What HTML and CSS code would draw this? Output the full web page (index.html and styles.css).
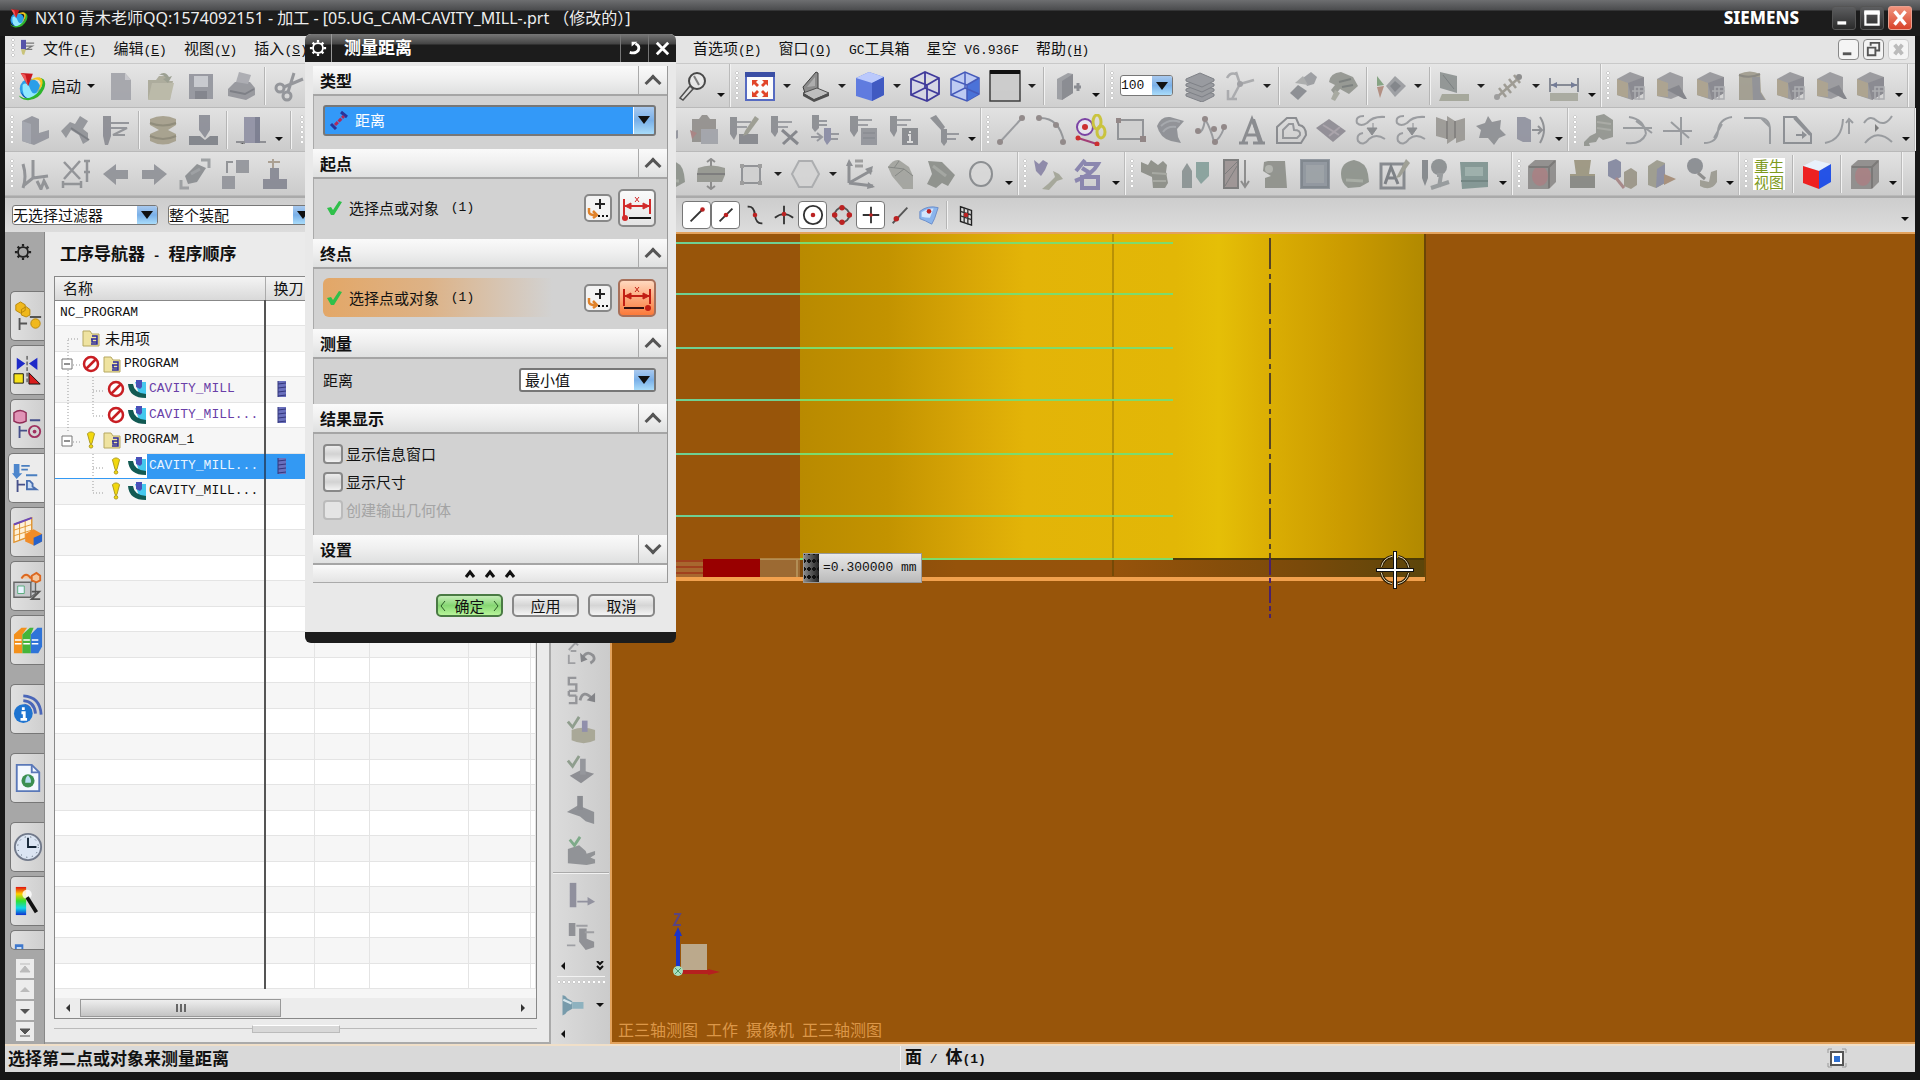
FILE: index.html
```html
<!DOCTYPE html>
<html lang="zh-CN">
<head>
<meta charset="utf-8">
<title>NX10 - 加工</title>
<link rel="stylesheet" href="styles.css">
</head>
<body>
<svg class="sprite" aria-hidden="true">
  <defs>
    <linearGradient id="gRain" x1="0" y1="0" x2="0" y2="1"><stop offset="0" stop-color="#e01010"/><stop offset=".25" stop-color="#ffd000"/><stop offset=".5" stop-color="#30e030"/><stop offset=".75" stop-color="#10d8e8"/><stop offset="1" stop-color="#1030d0"/></linearGradient>
    <linearGradient id="gFace" x1="0" y1="0" x2="1" y2="0"><stop offset="0" stop-color="#b98a00"/><stop offset=".14" stop-color="#c39300"/><stop offset=".27" stop-color="#d8a606"/><stop offset=".36" stop-color="#e3b408"/><stop offset=".6" stop-color="#e2b706"/><stop offset=".67" stop-color="#e5bf07"/><stop offset=".74" stop-color="#dcb004"/><stop offset=".87" stop-color="#cb9b00"/><stop offset="1" stop-color="#b18900"/></linearGradient>
    <linearGradient id="gBand" x1="0" y1="0" x2="1" y2="0"><stop offset="0" stop-color="#7e480b"/><stop offset=".25" stop-color="#95530b"/><stop offset=".5" stop-color="#96530b"/><stop offset=".8" stop-color="#7a4a0a"/><stop offset="1" stop-color="#5c450a"/></linearGradient>
  </defs>
  <symbol id="nx" viewBox="0 0 32 32"><circle cx="15" cy="19" r="11" fill="#2b9ee8"/><path d="M5 22q8 10 18 3-5 5-9 5-6 0-9-8z" fill="#0b4fae"/><path d="M7 15q5-5 9 6 3 6 8 0-2 9-10 9-8-2-7-15z" fill="#8fe8ff"/><path d="M3 26Q14 34 25 21 31 12 24 7q10 1 6 12-6 13-19 12-6-1-8-5z" fill="#2fb52d"/><path d="M15 10Q24 4 28 9q2 7-6 14 6-9 3-13-3-2-10 0z" fill="#f5c51b"/><path d="M5 2l13 1-5 13z" fill="#c9191e"/><path d="M5 2l5 2 3 12z" fill="#f15a5a"/></symbol>
  <symbol id="nav" viewBox="0 0 32 32"><path d="M8 3h8v15H8z" fill="#5653a8"/><path d="M8 18h8l-3 9-3-1z" fill="#c9c37a"/><path d="M16 8h13M16 13h10l-9 5h9" fill="none" stroke="#777" stroke-width="2"/></symbol>
  <symbol id="new" viewBox="0 0 32 32"><path d="M6 3h14l6 7v20H6z" fill="#a3a4aa"/><path d="M20 3v7h6z" fill="#c6c6cb"/></symbol>
  <symbol id="open" viewBox="0 0 32 32"><path d="M3 10h8l3-4h9v5h5l-3 18H3z" fill="#aaa998"/><path d="M7 13h22l-4 17H3z" fill="#b9b8a6"/><path d="M14 5q6-5 10 2l3-1-4 7-5-4 3-1q-3-4-7-3z" fill="#979b8c"/></symbol>
  <symbol id="save" viewBox="0 0 32 32"><path d="M4 4h24v25H4z" fill="#93959d"/><path d="M9 6h14v11H9z" fill="#c7c9ce"/><path d="M10 21h12v8H10z" fill="#7e8088"/></symbol>
  <symbol id="print" viewBox="0 0 32 32"><path d="M3 19l7-7h15l5 6v7l-9 5-18-4z" fill="#94959b"/><path d="M11 12l3-10 12 3-3 9z" fill="#a9aab0"/><path d="M5 21l15 3 9-5" stroke="#777980" fill="none" stroke-width="2"/></symbol>
  <symbol id="cut" viewBox="0 0 32 32"><g fill="none" stroke="#8f9196" stroke-width="3"><circle cx="7" cy="18" r="4"/><circle cx="14" cy="26" r="4"/><path d="M11 17l19-8M15 22L21 3"/></g></symbol>
  <symbol id="zoomi" viewBox="0 0 32 32"><circle cx="20" cy="11" r="8" fill="#e9e9e9" stroke="#3c3c3c" stroke-width="2"/><path d="M17 6l5 9" stroke="#777" stroke-width="2"/><path d="M13 16L3 28l3 2L16 19z" fill="#ddd" stroke="#444" stroke-width="1.5"/></symbol>
  <symbol id="fit" viewBox="0 0 32 32"><path d="M2 3h28v27H2z" fill="#fff" stroke="#4c62c0" stroke-width="2"/><path d="M1 2h30v5H1z" fill="#2e43a0"/><g fill="#e2391b"><path d="M8 10h6l-2 2 3 3-2 2-3-3-2 2zM24 10v6l-2-2-3 3-2-2 3-3-2-2zM8 27v-6l2 2 3-3 2 2-3 3 2 2zM24 27h-6l2-2-3-3 2-2 3 3 2-2z"/></g></symbol>
  <symbol id="orient" viewBox="0 0 32 32"><path d="M4 17L17 2l2 1v16l-13 4z" fill="#858585" stroke="#333"/><path d="M4 23l14-5 12 5-15 7z" fill="#bdbdbd" stroke="#444"/><path d="M8 17l8-10v9z" fill="#aaa"/><path d="M4 23l11 6 15-6v3l-15 6-11-6z" fill="#444"/></symbol>
  <symbol id="cube" viewBox="0 0 32 32"><path d="M2 8l13-6 15 5v18l-12 6-16-5z" fill="#5674e0"/><path d="M2 8l13-6 15 5-12 6z" fill="#b8c8ff"/><path d="M18 13l12-6v18l-12 6z" fill="#3450c0"/></symbol>
  <symbol id="wire" viewBox="0 0 32 32"><path d="M2 9l14-7 14 6v16l-12 7-16-6zM2 9l16 6 12-7M18 15v16M2 25l14-7 14 6M16 2v16" fill="#d4d4ee" fill-opacity=".6" stroke="#332d96" stroke-width="1.8"/></symbol>
  <symbol id="wire2" viewBox="0 0 32 32"><path d="M2 9l14-7 14 6v16l-12 7-16-6z" fill="#bccaf5" stroke="#3a50b8" stroke-width="1.5"/><path d="M18 15l12-7v16l-12 7z" fill="#3f6ad8"/><path d="M2 9l16 6v16M18 15l12-7M16 2v16l-14 7M16 18l14 6" fill="none" stroke="#3a50b8" stroke-width="1.5"/></symbol>
  <symbol id="bgsq" viewBox="0 0 32 32"><path d="M1 1h30v30H1z" fill="#cbcbcb" stroke="#333" stroke-width="1.5"/><path d="M1 0h30v4H1z" fill="#000"/></symbol>
  <symbol id="clip" viewBox="0 0 32 32"><path d="M5 9L16 3l5 1v19L10 30l-5-1z" fill="#9a9ca1"/><path d="M10 11l11-7v19l-11 7z" fill="#85878d"/><path d="M22 17h7M26 13v8" stroke="#85878d" stroke-width="3"/></symbol>
  <symbol id="layers" viewBox="0 0 32 32"><g fill="#94969b" stroke="#777a80"><path d="M2 24l14-5 14 5v2l-12 6-16-6z"/><path d="M2 19l14-5 14 5v2l-12 6-16-6z"/><path d="M2 14l14-5 14 5v2l-12 6-16-6z"/><path d="M2 9l14-6 14 6v2l-12 6-16-6z"/></g></symbol>
  <symbol id="csys" viewBox="0 0 32 32"><path d="M16 14L8 29M16 14l14-4M16 14L12 2M3 8q3-6 9-4M4 20v9h9" fill="none" stroke="#a7a8ab" stroke-width="2.5"/><circle cx="16" cy="14" r="3" fill="#9b9ca0"/></symbol>
  <symbol id="axes" viewBox="0 0 32 32"><path d="M4 25V5M4 25l24 3M4 25L27 12" fill="none" stroke="#888a8e" stroke-width="3"/><path d="M28 8l-2 9-6-6zM30 29l-8 2 1-7zM1 8l3-7 4 7z" fill="#888a8e"/><path d="M10 3h8M10 8h8" stroke="#999" stroke-width="3"/></symbol>
  <symbol id="move" viewBox="0 0 32 32"><path d="M3 23l8-8 9 6-9 9z" fill="#888b90"/><path d="M16 8l8-6 6 5-3 7-7 2z" fill="#999b9f"/><path d="M8 13l8-7 5 9z" fill="#a9abab"/></symbol>
  <symbol id="paint" viewBox="0 0 32 32"><path d="M2 12Q3 3 14 2l12 5 5 9-9 8-9-5-5 6-4-5 4-5z" fill="#92958f"/><path d="M8 20l5 3-5 8-4-2z" fill="#a5a79d"/><path d="M12 12l12-3M15 17l11-2" stroke="#757a78" stroke-width="2"/></symbol>
  <symbol id="diamond" viewBox="0 0 32 32"><path d="M11 16l9-10 11 10-11 11z" fill="#9a9ca0"/><path d="M15 16l5-5 6 5-6 6z" fill="#7d8085"/><path d="M2 6l7 9-7 1z" fill="#7f9f7c"/><path d="M2 17l7-1-4 12z" fill="#b08a7c"/></symbol>
  <symbol id="plane" viewBox="0 0 32 32"><path d="M2 2l17 4v17L2 18z" fill="#8d9291"/><path d="M4 24h27v7H1z" fill="#a3a598"/><path d="M5 5l11 14" stroke="#74797a"/></symbol>
  <symbol id="ruler" viewBox="0 0 32 32"><path d="M3 28L28 6M6 18l7 9M11 14l7 9M16 9l7 9M21 5l6 8" stroke="#9a978f" stroke-width="2.5"/><circle cx="4" cy="27" r="3" fill="#999"/><circle cx="26" cy="7" r="3" fill="#888"/></symbol>
  <symbol id="dim" viewBox="0 0 32 32"><path d="M2 8v14M30 8v14M3 15h26" stroke="#808590" stroke-width="2"/><path d="M3 15l6-3v6zM29 15l-6-3v6z" fill="#6c7592"/><path d="M2 23h28v8H2z" fill="#a7a89d"/></symbol>
  <symbol id="cubeg" viewBox="0 0 32 32"><path d="M2 9l13-7 14 5v16l-12 7-15-5z" fill="#96969a"/><path d="M2 9l11 4v15L2 25z" fill="#aaa08b"/><path d="M13 13l16-6v16l-12 7z" fill="#85858c"/><path d="M17 21h13M20 17h9v12h-9zM24 17v13" fill="none" stroke="#a9aaae" stroke-width="1.5"/></symbol>
  <symbol id="cubeh" viewBox="0 0 32 32"><path d="M2 9l13-7 13 5v17l-12 5-14-3z" fill="#98989c"/><path d="M2 9l11 4v14L2 26z" fill="#aaa08b"/><path d="M12 20l17 9h3l-8-14z" fill="#7f8086"/></symbol>
  <symbol id="cyl" viewBox="0 0 32 32"><path d="M4 4q11-5 21 0l1 18 5 8H4z" fill="#a09c8e"/><path d="M4 5q11 4 21-1" stroke="#85837c" stroke-width="2" fill="none"/><path d="M17 7h8v15l5 8H18z" fill="#8d8e93"/></symbol>
  <symbol id="block" viewBox="0 0 32 32"><path d="M3 7l10-5 7 3v14l10-3v8l-15 7-12-4z" fill="#92949c"/><path d="M3 7l9 3v20l-9-3z" fill="#a1a4ad"/></symbol>
  <symbol id="mach" viewBox="0 0 32 32"><path d="M2 17L11 8l5 2 5-8 8 5-5 8 5 4v8l-5 3-4-9-8-5-5 8z" fill="#919398"/><path d="M12 14l18 12" stroke="#74777d" stroke-width="2"/></symbol>
  <symbol id="tool" viewBox="0 0 32 32"><path d="M4 2h8v20l-3 9H6L4 22z" fill="#8b8c93"/><path d="M12 9h18M12 14h16l-14 7h12" fill="none" stroke="#8f9196" stroke-width="2"/></symbol>
  <symbol id="spool" viewBox="0 0 32 32"><path d="M3 5q13-6 26 0v6l-8 5 8 4v7q-13 7-26 0v-7l9-4-9-5z" fill="#a59f8b"/><path d="M3 9q13 5 26 0M3 22q13 6 26 0" fill="none" stroke="#8b8775" stroke-width="2"/></symbol>
  <symbol id="drill" viewBox="0 0 32 32"><path d="M12 1h11v15l-5 8-6-8z" fill="#8c8e97"/><path d="M2 22h11l5 4 5-4h8v9H2z" fill="#7f8289"/></symbol>
  <symbol id="door" viewBox="0 0 32 32"><path d="M9 3h14v26H9z" fill="#9091a4"/><path d="M20 3h5v26h-5z" fill="#777a8d"/><path d="M1 28h8v2M25 28h6" stroke="#8a8b90" stroke-width="2"/></symbol>
  <symbol id="paste" viewBox="0 0 32 32"><path d="M4 5h7l3-4h5l3 4h6v23H4z" fill="#928f8c"/><path d="M13 15h17v15H13z" fill="#a1a3a9"/><path d="M2 16l7 3-5 6z" fill="#a77f7f"/></symbol>
  <symbol id="tooledit" viewBox="0 0 32 32"><path d="M2 3h7v17l-3 6-4-6z" fill="#8a8c91"/><path d="M9 8h14M9 13h10" stroke="#999ba0" stroke-width="2"/><path d="M11 20h19v10H11z" fill="#85878c"/><path d="M27 2l4 3-11 15-5 2 2-5z" fill="#999a8f"/></symbol>
  <symbol id="toolx" viewBox="0 0 32 32"><path d="M3 2h7v16l-3 5-4-5z" fill="#8a8c91"/><path d="M10 8h14M10 13h10" stroke="#999ba0" stroke-width="2"/><path d="M14 16l16 14M29 17L15 30" stroke="#808288" stroke-width="3"/></symbol>
  <symbol id="tools2" viewBox="0 0 32 32"><path d="M4 1h7v13l-4 4-3-4z" fill="#8a8c91"/><path d="M16 14h7v12l-4 5-3-5z" fill="#8a8ca5"/><path d="M11 7h8M11 11h8M23 20h8M23 25h7M3 23h10M9 19l5 4-5 4" fill="none" stroke="#92949a" stroke-width="2"/></symbol>
  <symbol id="toolcopy" viewBox="0 0 32 32"><path d="M2 2h8v15l-4 6-4-6z" fill="#8a8c91"/><path d="M10 6h14M10 11h10" stroke="#999ba0" stroke-width="2"/><path d="M13 14h16v17H13z" fill="#92949a"/><path d="M15 19h12M15 24h12" stroke="#7d8086"/></symbol>
  <symbol id="toolinfo" viewBox="0 0 32 32"><path d="M2 2h7v15l-3 6-4-6z" fill="#8a8c91"/><path d="M9 6h14M9 11h10" stroke="#999ba0" stroke-width="2"/><path d="M14 14h16v17H14z" fill="#85878c"/><path d="M22 17v2M20 21h2v7M19 28h6" stroke="#ddd" stroke-width="2" fill="none"/></symbol>
  <symbol id="toolang" viewBox="0 0 32 32"><path d="M2 4l6-3 9 12-3 4z" fill="#8a8c91"/><path d="M13 15h6v13l-3 4-3-4z" fill="#8a8c91"/><path d="M19 20h12M19 25h9" stroke="#92949a" stroke-width="2"/></symbol>
  <symbol id="line" viewBox="0 0 32 32"><path d="M5 28L27 4" stroke="#95979b" stroke-width="2"/><circle cx="5" cy="28" r="3" fill="#8d8585"/><circle cx="27" cy="4" r="3" fill="#8d8585"/></symbol>
  <symbol id="arc" viewBox="0 0 32 32"><path d="M4 4q20-1 25 24" stroke="#909296" stroke-width="2" fill="none"/><circle cx="4" cy="4" r="3" fill="#8d8585"/><circle cx="21" cy="11" r="3" fill="#8d8585"/><circle cx="28" cy="28" r="3" fill="#8d8585"/></symbol>
  <symbol id="ccurve" viewBox="0 0 32 32"><circle cx="10" cy="13" r="8" fill="#e9e6f0" stroke="#7438a0" stroke-width="2"/><circle cx="10" cy="13" r="3" fill="#c22"/><path d="M3 24l19 6" stroke="#a0326f" stroke-width="2"/><circle cx="3" cy="24" r="2.500" fill="#c22"/><circle cx="22" cy="30" r="2.500" fill="#c22"/><ellipse cx="22" cy="8" rx="4" ry="7" fill="none" stroke="#c9c233" stroke-width="3"/><ellipse cx="26" cy="18" rx="4" ry="6" fill="none" stroke="#c9c233" stroke-width="3"/></symbol>
  <symbol id="rect" viewBox="0 0 32 32"><path d="M3 6h25v19H3z" fill="#d0d0d0" stroke="#8d8f93" stroke-width="2"/><path d="M1 4h5v5H1zM25 22h6v6h-6z" fill="#8d8080"/></symbol>
  <symbol id="rect2" viewBox="0 0 32 32"><path d="M7 8h18v17H7z" fill="#d0d0d0" stroke="#8d8f93" stroke-width="2"/><path d="M5 6h4v4H5zM23 6h4v4h-4zM5 23h4v4H5zM23 23h4v4h-4z" fill="#999"/></symbol>
  <symbol id="surf" viewBox="0 0 32 32"><path d="M2 12Q6 2 15 3l14 4-7 8 1 8 3 6-10-2Q5 24 2 12z" fill="#8c8e93"/><path d="M6 12q8-8 19-4M8 18q4-6 13-5" stroke="#a2a5aa" fill="none" stroke-width="2"/></symbol>
  <symbol id="spline" viewBox="0 0 32 32"><path d="M3 18q5 2 7-13 6 10 9 23 6-3 10-14" fill="none" stroke="#94969a" stroke-width="2"/><g fill="#8d8282"><circle cx="3" cy="17" r="3"/><circle cx="10" cy="5" r="3"/><circle cx="19" cy="15" r="3"/><circle cx="20" cy="28" r="3"/><circle cx="29" cy="13" r="3"/></g></symbol>
  <symbol id="textA" viewBox="0 0 32 32"><path d="M4 29h9M18 29h12M8 28L17 5l9 23M11 21h11" fill="none" stroke="#85878b" stroke-width="3"/><path d="M16 5h4l8 23h-5z" fill="#85878b"/></symbol>
  <symbol id="offs" viewBox="0 0 32 32"><path d="M2 29V13L12 4h9l3 7q7 1 7 10l-5 8z" fill="none" stroke="#85878b" stroke-width="2"/><path d="M8 24v-8l6-6h4l1 6q7 0 6 5l-3 3z" fill="none" stroke="#909296" stroke-width="2"/></symbol>
  <symbol id="patch" viewBox="0 0 32 32"><path d="M1 14L14 5l17 12-13 11z" fill="#8e8b93"/><path d="M8 11l16 10M14 22l11-9" stroke="#a7a0a8" stroke-width="2"/></symbol>
  <symbol id="proj" viewBox="0 0 32 32"><path d="M9 2Q0 2 2 9q4 4 10 0 6-7 18-6M8 19q-7 1-5 8 5 6 11-2 7-6 16 0" fill="none" stroke="#96989c" stroke-width="2"/><path d="M18 9v8M12 14h10l-5 7z" fill="#85878b" stroke="#85878b"/></symbol>
  <symbol id="wall" viewBox="0 0 32 32"><path d="M1 3l11 4V2l8 5 10-3v22l-9 3v-5l-9 6v-5L1 22z" fill="#9a9894"/><path d="M12 7v18M20 7v17" stroke="#7f7d7b" stroke-width="2"/></symbol>
  <symbol id="starx" viewBox="0 0 32 32"><path d="M13 2l4 6 9-2-1 9 6 6-7 3-5 7-6-7H4l2-8-5-4 9-3z" fill="#8d8f93"/></symbol>
  <symbol id="extr" viewBox="0 0 32 32"><path d="M2 3h8l6 3v22H8l-6-3z" fill="#9193a0"/><path d="M17 16h10M23 12l4 4-4 4M25 3q8 12 0 26" fill="none" stroke="#8a8c90" stroke-width="2"/></symbol>
  <symbol id="cross1" viewBox="0 0 32 32"><path d="M7 3q15 2 17 17M1 14h29M4 29q15 2 20-9M14 7l16 12" fill="none" stroke="#94979b" stroke-width="2"/></symbol>
  <symbol id="cross2" viewBox="0 0 32 32"><path d="M1 17h29M19 3v28M9 8l18 16" fill="none" stroke="#94979b" stroke-width="2"/></symbol>
  <symbol id="scurve" viewBox="0 0 32 32"><path d="M2 29q13 0 14-12T30 3M12 24l8-14" fill="none" stroke="#94979b" stroke-width="2"/></symbol>
  <symbol id="fillet" viewBox="0 0 32 32"><path d="M2 4h15q11 0 11 12v14M19 4l9 9" fill="none" stroke="#94979b" stroke-width="2"/></symbol>
  <symbol id="trimc" viewBox="0 0 32 32"><path d="M2 3h12l15 17v9H2zM14 21h9M12 4l16 17" fill="none" stroke="#888b90" stroke-width="2"/><path d="M20 17l5 4-5 4z" fill="#888b90"/></symbol>
  <symbol id="length" viewBox="0 0 32 32"><path d="M3 29q17-3 18-24M27 7v13M24 9l3-4 4 4" fill="none" stroke="#94979b" stroke-width="2"/></symbol>
  <symbol id="smooth" viewBox="0 0 32 32"><path d="M2 9q6-9 13-2 8 6 15-5M3 29q12-15 27-1" fill="none" stroke="#94979b" stroke-width="2"/><path d="M13 10v8l4-4z" fill="#777"/></symbol>
  <symbol id="poly" viewBox="0 0 32 32"><path d="M9 3h13l7 13-7 13H9L2 16z" fill="#d5d5d5" stroke="#a9abad" stroke-width="2"/></symbol>
  <symbol id="circ" viewBox="0 0 32 32"><ellipse cx="16" cy="16" rx="11" ry="12" fill="#d8d8d8" stroke="#86898c" stroke-width="2"/></symbol>
  <symbol id="mesh" viewBox="0 0 32 32"><path d="M3 9Q8 1 14 2l10 7 4 9v13H18L7 18z" fill="#a2a39e"/><path d="M3 9l16 2 9 7M10 18l9-7M14 3l-5 7" stroke="#7f827e" fill="none"/></symbol>
  <symbol id="blob" viewBox="0 0 32 32"><path d="M3 3l14 1 13 13-7 11-6-3-6 5-9-4 5-10z" fill="#8b8e89"/><path d="M8 8l13 10" stroke="#a0a39e" stroke-width="3"/></symbol>
  <symbol id="split" viewBox="0 0 32 32"><path d="M3 10q13-5 27 0v7l-3 7H2v-7z" fill="#94968f"/><path d="M16 1v7M12 4l4-3 4 3M16 24v7M12 28l4 3 4-3" stroke="#888" stroke-width="2" fill="none"/><path d="M2 16h28" stroke="#777" stroke-width="2"/></symbol>
  <symbol id="wrench" viewBox="0 0 32 32"><path d="M2 2l5 4 4-4 5 3-3 7-4 6-5-5z" fill="#8985a6"/><path d="M16 26l7-7-2-6 6 3 4 5-6 2-8 9-7-1z" fill="#a3a597"/></symbol>
  <symbol id="ming" viewBox="0 0 32 32"><path d="M13 2L4 13M12 6h14Q20 17 3 23M10 10l8 5M10 19h16v11H10z" fill="none" stroke="#8580ac" stroke-width="4"/></symbol>
  <symbol id="hands" viewBox="0 0 32 32"><path d="M2 4l7 3 3-5 7 5 5-4 4 4-1 7 2 11-3 5H14l-1-11-11-5z" fill="#8b8d86"/><path d="M13 15l15 1M14 23h13" stroke="#a4a69f" stroke-width="2"/></symbol>
  <symbol id="bottle" viewBox="0 0 32 32"><path d="M3 13l5-8 5 8v17H3z" fill="#8a9393"/><path d="M17 4h13v14l-8 8-5-7z" fill="#86a09b"/></symbol>
  <symbol id="height" viewBox="0 0 32 32"><path d="M5 2h14v28H5z" fill="#9b9292" stroke="#777" stroke-width="2"/><path d="M6 28L18 8M6 16l12-12" stroke="#777"/><path d="M26 2v26M22 23l4 6 4-6" fill="none" stroke="#888" stroke-width="2"/></symbol>
  <symbol id="jigsaw" viewBox="0 0 32 32"><path d="M9 3h17l2 27H6V20l6-2-8-5 1-9z" fill="#8e908a"/><circle cx="10" cy="11" r="4" fill="#b0b2ac"/></symbol>
  <symbol id="sheetp" viewBox="0 0 32 32"><path d="M14 2l8-2 9 6v17l-10 3-4-3-3 5-7 1 1 3H2v-4l6-6 6-3z" fill="#92958f"/><path d="M15 8l14 2M15 14l14 2" stroke="#a6a8a2" stroke-width="2"/></symbol>
  <symbol id="sheet" viewBox="0 0 32 32"><path d="M1 1h30v30H1z" fill="#8d949c"/><path d="M3 3h26v26H3z" fill="none" stroke="#7a8189" stroke-width="2"/><path d="M7 7h18v18H7z" fill="#999fa4"/></symbol>
  <symbol id="ball" viewBox="0 0 32 32"><path d="M2 16Q2 4 15 2q12 2 14 14l1 8-9 5-12 1q-7-5-7-14z" fill="#8d928b"/><path d="M7 22l17 1" stroke="#a5aaa2" stroke-width="3"/></symbol>
  <symbol id="note" viewBox="0 0 32 32"><path d="M2 6h23v24H2z" fill="none" stroke="#81858a" stroke-width="3"/><path d="M6 26l6-17 7 17M8 20h9" fill="none" stroke="#777b80" stroke-width="3"/><path d="M27 1l4 4-10 14-4 1z" fill="#9b9c91"/></symbol>
  <symbol id="pens" viewBox="0 0 32 32"><path d="M3 2h6v18l-3 8-3-8z" fill="#82868a"/><circle cx="20" cy="9" r="8" fill="#8a8e90"/><path d="M18 17h4l-2 12M12 30l18-6" stroke="#94989a" stroke-width="4" fill="none"/></symbol>
  <symbol id="screen" viewBox="0 0 32 32"><path d="M1 4h28v25l-26 2z" fill="#7f9491"/><path d="M6 9h18v9H6z" fill="#9aada9"/><path d="M2 23h27" stroke="#6b807d" stroke-width="2"/></symbol>
  <symbol id="redbox" viewBox="0 0 32 32"><path d="M2 8l7-6h21v22l-7 7H2z" fill="#8d8b8a"/><ellipse cx="14" cy="18" rx="8" ry="10" fill="#a37c7f"/><path d="M3 9h20v21M23 9l6-6" fill="none" stroke="#747271" stroke-width="2"/></symbol>
  <symbol id="press" viewBox="0 0 32 32"><path d="M8 2h17l-2 14h6v14H4V16h6z" fill="#9b957f"/><path d="M4 18h25v12H4z" fill="#868782"/></symbol>
  <symbol id="two" viewBox="0 0 32 32"><path d="M2 4l8-3 5 3v15l-6 3-7-4z" fill="#8488a0"/><path d="M18 14l7-4 6 4v13l-6 4-7-3z" fill="#9a9587"/><path d="M10 20l8 10" stroke="#a58484" stroke-width="3"/></symbol>
  <symbol id="asm" viewBox="0 0 32 32"><path d="M2 8l9-6 8 3v20l-9 5-8-3z" fill="#9b9a8c"/><path d="M11 11l8-5v19l-9 5z" fill="#888ba0"/><path d="M18 16l12 5-12 6z" fill="#a58c76"/></symbol>
  <symbol id="rota" viewBox="0 0 32 32"><circle cx="9" cy="8" r="8" fill="#888b90"/><path d="M14 28q11 6 17-4V12l-6 2-2 10-9-2z" fill="#9b9a90"/><path d="M12 15l7 6" stroke="#888" stroke-width="3"/></symbol>
  <symbol id="rgb" viewBox="0 0 32 32"><path d="M2 8l12-6 16 4-12 7z" fill="#e9f3ff"/><path d="M2 8l16 5v18L2 25z" fill="#f01212"/><path d="M18 13l12-7v18l-12 7z" fill="#1648e8"/></symbol>
  <symbol id="back" viewBox="0 0 32 32"><path d="M4 16L17 6v6h12v9H17v6z" fill="#909298"/></symbol>
  <symbol id="fwd" viewBox="0 0 32 32"><path d="M28 16L15 6v6H3v9h12v6z" fill="#909298"/></symbol>
  <symbol id="cys" viewBox="0 0 32 32"><path d="M14 2v18L4 28M14 20l15-2M4 6q4 13 0 24M18 23l4 8 3-8 4 8" fill="none" stroke="#8d8f93" stroke-width="3"/></symbol>
  <symbol id="xdim" viewBox="0 0 32 32"><path d="M5 4l16 17M21 3L5 21M3 26h20M4 23v7M22 23v7M28 2v22M25 3h6M25 14h6" fill="none" stroke="#8d8f93" stroke-width="2.500"/></symbol>
  <symbol id="pts" viewBox="0 0 32 32"><path d="M17 2h13v13H17zM3 18h13v13H3z" fill="#93959b"/><path d="M14 4H8v11" stroke="#8d8f93" stroke-width="2" fill="none"/></symbol>
  <symbol id="probe" viewBox="0 0 32 32"><path d="M9 4h12M14 1v9" stroke="#a79b8c" stroke-width="2"/><path d="M11 10h9v11h8v10H4V21h7z" fill="#868893"/></symbol>
  <symbol id="flip" viewBox="0 0 32 32"><path d="M6 18l12-12 9 4-9 14-9 2z" fill="#8a8d90"/><path d="M2 22v8h8M22 2h8v8M12 16l9-5" stroke="#9a9da0" stroke-width="3" fill="none"/></symbol>
  <symbol id="und" viewBox="0 0 32 32"><path d="M3 3l10 8M17 1L3 16M3 21v9h7M5 17h6" fill="none" stroke="#9a9b9e" stroke-width="2"/><path d="M18 24q4-8 11-2 3 5-3 8" fill="none" stroke="#8a8b8e" stroke-width="3"/><path d="M15 19l1 10 7-3z" fill="#7d7e82"/></symbol>
  <symbol id="redo" viewBox="0 0 32 32"><path d="M11 3H3v7h8v7H3M11 17v0M3 22h8M3 17v5M11 22v8H3" fill="none" stroke="#909195" stroke-width="2.500"/><path d="M15 27q3-12 13-2" fill="none" stroke="#8a8b8e" stroke-width="3"/><path d="M31 19v10l-9-2z" fill="#7d7e82"/></symbol>
  <symbol id="chkbox" viewBox="0 0 32 32"><path d="M6 16q12-5 25 0v11q-12 6-25 0z" fill="#a6a593"/><path d="M17 6h6v12h-6z" fill="#8b8aa8"/><path d="M2 7l5 6 7-11" fill="none" stroke="#8a9a88" stroke-width="3"/></symbol>
  <symbol id="chkpl" viewBox="0 0 32 32"><path d="M4 22l12-6 14 4-14 10z" fill="#898a8f"/><path d="M15 4h6v17h-6z" fill="#909298"/><path d="M2 6l5 6 7-11" fill="none" stroke="#8a9a88" stroke-width="3"/></symbol>
  <symbol id="pl" viewBox="0 0 32 32"><path d="M1 18l12-7 17 7v13l-9-3-6-5z" fill="#8a8c91"/><path d="M12 1h6v15h-6z" fill="#84868c"/></symbol>
  <symbol id="chkm" viewBox="0 0 32 32"><path d="M2 30V15l12-4 7 6 1 3 9-3v4l-5 3 5 2v4l-9 2z" fill="#8c8e92"/><path d="M4 5l5 6 6-9" fill="none" stroke="#77a783" stroke-width="3"/></symbol>
  <symbol id="toolarr" viewBox="0 0 32 32"><path d="M4 2h7v26H4z" fill="#8b8b99"/><path d="M12 21h11v-4l8 5-8 4v-3H12z" fill="#8d8d9b"/></symbol>
  <symbol id="toolblk" viewBox="0 0 32 32"><path d="M3 2h7v14H3zM14 8h8v11l8 3v6l-9 3-7-9z" fill="#8b8c91"/><path d="M11 5h12M20 12h10M1 26h9" stroke="#9a9ba0" stroke-width="2"/></symbol>
  <symbol id="spindle" viewBox="0 0 32 32"><path d="M2 3q4 0 6 4l7 4v10l-7 4q-2 4-6 5z" fill="#779bab"/><path d="M15 12h15v9H15z" fill="#8eb2bf"/><path d="M3 9l11 5" stroke="#d5e6ec" stroke-width="3"/></symbol>
  <symbol id="caret" viewBox="0 0 10 6"><path d="M1 1h8L5 5z" fill="#111"/></symbol>
  <symbol id="gear" viewBox="0 0 20 20"><circle cx="10" cy="10" r="5.500" fill="none" stroke="currentColor" stroke-width="2"/><path d="M10 1v3M10 16v3M1 10h3M16 10h3M4 4l2 2M14 14l2 2M4 16l2-2M14 6l2-2" stroke="currentColor" stroke-width="2.500"/></symbol>
  <symbol id="no" viewBox="0 0 18 18"><circle cx="9" cy="9" r="7" fill="#fff" stroke="#c81e23" stroke-width="2.500"/><path d="M4 14L14 4" stroke="#c81e23" stroke-width="2.500"/></symbol>
  <symbol id="bang" viewBox="0 0 18 20"><path d="M5 3q4-4 8 0l-3 11H8z" fill="#f2d80e" stroke="#a8951a"/><circle cx="9" cy="17" r="2" fill="#f2d80e" stroke="#a8951a"/></symbol>
  <symbol id="fold" viewBox="0 0 18 18"><path d="M1 2h7l2 3h7v12H1z" fill="#efe3a0" stroke="#b6a860"/><path d="M10 7h5v3h-5v3h5M9 10h6v5H9" fill="none" stroke="#2c2a9a" stroke-width="1.500"/></symbol>
  <symbol id="mill" viewBox="0 0 18 18"><path d="M7 2h11v15h-6z" fill="#45c8ee"/><path d="M0 4h5q1 9 13 10v4Q1 18 0 4z" fill="#125a53"/><path d="M8 0h6v7l-2 2-4-2z" fill="#4a50b8"/></symbol>
  <symbol id="bit" viewBox="0 0 12 18"><path d="M2 1h8v16H2z" fill="#6a70bd"/><path d="M2 4l8-1M2 8l8-1M2 12l8-1M2 16l8-1M2 1v16" stroke="#33367c"/></symbol>
  <symbol id="tick" viewBox="0 0 18 18"><path d="M2 9l4-1 2 3 6-9 3 1-8 13H6z" fill="#2fc04a"/></symbol>
  <symbol id="ptdlg" viewBox="0 0 24 24"><path d="M14 3v10M9 8h10" stroke="#222" stroke-width="2"/><path d="M3 12v4q0 3 6 3M7 15l4 4-4 3" fill="none" stroke="#e0822a" stroke-width="2.500"/><path d="M12 19h2v2h-2zM16 19h2v2h-2zM20 19h2v2h-2z" fill="#111"/></symbol>
</svg>

<div class="app">
  <header class="titlebar">
    <svg class="logo"><use href="#nx"/></svg>
    <h1>NX10 青木老师QQ:1574092151 - 加工 - [05.UG_CAM-CAVITY_MILL-.prt （修改的）]</h1>
    <strong class="brand">SIEMENS</strong>
    <div class="winbtns">
      <button aria-label="最小化"><svg viewBox="0 0 20 20"><path d="M4 13h8v3H4z" fill="#fff"/></svg></button>
      <button aria-label="最大化"><svg viewBox="0 0 20 20"><path d="M4 5h12v11H4z" fill="none" stroke="#fff" stroke-width="2"/><path d="M3 3h14v4H3z" fill="#fff"/></svg></button>
      <button class="close" aria-label="关闭"><svg viewBox="0 0 20 20"><path d="M5 4l10 12M15 4L5 16" stroke="#fff" stroke-width="3"/></svg></button>
    </div>
  </header>

  <nav class="menubar">
    <div class="menus first"><i class="grip"></i><svg class="mi"><use href="#nav"/></svg>
      <button>文件<kbd>(<u>F</u>)</kbd></button><button>编辑<kbd>(<u>E</u>)</kbd></button><button>视图<kbd>(<u>V</u>)</kbd></button><button>插入<kbd>(<u>S</u>)</kbd></button></div>
    <div class="menus rest"><button>首选项<kbd>(<u>P</u>)</kbd></button><button>窗口<kbd>(<u>O</u>)</kbd></button><button><kbd>GC</kbd>工具箱</button><button>星空<kbd> V6.936F</kbd></button><button>帮助<kbd>(<u>H</u>)</kbd></button></div>
    <div class="docbtns">
      <button aria-label="最小化"><svg viewBox="0 0 20 20"><path d="M4 13h9v3H4z" fill="#555"/></svg></button>
      <button aria-label="还原"><svg viewBox="0 0 20 20"><path d="M7 6V3h9v8h-3M4 8h8v8H4z" fill="none" stroke="#555" stroke-width="2"/></svg></button>
      <button class="dim" aria-label="关闭" disabled><svg viewBox="0 0 20 20"><path d="M6 5l8 10M14 5L6 15" stroke="#bbb" stroke-width="4"/></svg></button>
    </div>
  </nav>

  <div class="bar">
    <div class="lead wide"><i class="grip"></i>
      <button class="start"><svg><use href="#nx"/></svg>启动<svg class="c"><use href="#caret"/></svg></button>
      <button class="tb"><svg><use href="#new"/></svg></button><button class="tb"><svg><use href="#open"/></svg></button><button class="tb"><svg><use href="#save"/></svg></button><button class="tb"><svg><use href="#print"/></svg></button><i class="sep"></i><button class="tb"><svg><use href="#cut"/></svg></button></div>
    <div class="grp"><button class="tb"><svg><use href="#zoomi"/></svg></button><svg class="low"><use href="#caret"/></svg></div>
    <div class="grp"><i class="grip"></i>
      <button class="tb dd"><svg><use href="#fit"/></svg><svg class="c"><use href="#caret"/></svg></button><button class="tb dd"><svg><use href="#orient"/></svg><svg class="c"><use href="#caret"/></svg></button><button class="tb dd"><svg><use href="#cube"/></svg><svg class="c"><use href="#caret"/></svg></button><button class="tb"><svg><use href="#wire"/></svg></button><button class="tb"><svg><use href="#wire2"/></svg></button><button class="tb dd"><svg><use href="#bgsq"/></svg><svg class="c"><use href="#caret"/></svg></button><i class="sep"></i><button class="tb"><svg><use href="#clip"/></svg></button><svg class="low"><use href="#caret"/></svg></div>
    <div class="grp"><i class="grip"></i>
      <span class="combo layer"><select aria-label="工作图层"><option>100</option></select><span class="arr"></span></span><button class="tb"><svg><use href="#layers"/></svg></button><button class="tb dd"><svg><use href="#csys"/></svg><svg class="c"><use href="#caret"/></svg></button><i class="sep"></i><button class="tb"><svg><use href="#move"/></svg></button><button class="tb"><svg><use href="#paint"/></svg></button><i class="sep"></i><button class="tb dd"><svg><use href="#diamond"/></svg><svg class="c"><use href="#caret"/></svg></button><i class="sep"></i><button class="tb dd"><svg><use href="#plane"/></svg><svg class="c"><use href="#caret"/></svg></button><button class="tb dd"><svg><use href="#ruler"/></svg><svg class="c"><use href="#caret"/></svg></button><button class="tb"><svg><use href="#dim"/></svg></button><svg class="low"><use href="#caret"/></svg></div>
    <div class="grp"><i class="grip"></i>
      <button class="tb"><svg><use href="#cubeg"/></svg></button><button class="tb"><svg><use href="#cubeh"/></svg></button><button class="tb"><svg><use href="#cubeg"/></svg></button><button class="tb"><svg><use href="#cyl"/></svg></button><button class="tb"><svg><use href="#cubeg"/></svg></button><button class="tb"><svg><use href="#cubeh"/></svg></button><button class="tb"><svg><use href="#cubeg"/></svg></button><svg class="low"><use href="#caret"/></svg></div>
  </div>

  <div class="bar">
    <div class="lead mid"><i class="grip"></i>
      <button class="tb"><svg><use href="#block"/></svg></button><button class="tb"><svg><use href="#mach"/></svg></button><button class="tb"><svg><use href="#tool"/></svg></button><i class="sep"></i><button class="tb"><svg><use href="#spool"/></svg></button><button class="tb"><svg><use href="#drill"/></svg></button><i class="sep"></i><button class="tb"><svg><use href="#door"/></svg></button><svg class="low"><use href="#caret"/></svg><i class="sep"></i><i class="grip"></i></div>
    <div class="grp"><button class="tb"><svg><use href="#block"/></svg></button><button class="tb"><svg><use href="#paste"/></svg></button><button class="tb"><svg><use href="#tooledit"/></svg></button><button class="tb"><svg><use href="#toolx"/></svg></button><button class="tb"><svg><use href="#tools2"/></svg></button><button class="tb"><svg><use href="#toolcopy"/></svg></button><button class="tb"><svg><use href="#toolinfo"/></svg></button><button class="tb"><svg><use href="#toolang"/></svg></button><svg class="low"><use href="#caret"/></svg></div>
    <div class="grp"><i class="grip"></i>
      <button class="tb"><svg><use href="#line"/></svg></button><button class="tb"><svg><use href="#arc"/></svg></button><button class="tb"><svg><use href="#ccurve"/></svg></button><button class="tb"><svg><use href="#rect"/></svg></button><button class="tb"><svg><use href="#surf"/></svg></button><button class="tb"><svg><use href="#spline"/></svg></button><button class="tb"><svg><use href="#textA"/></svg></button><button class="tb"><svg><use href="#offs"/></svg></button><button class="tb"><svg><use href="#patch"/></svg></button><button class="tb"><svg><use href="#proj"/></svg></button><button class="tb"><svg><use href="#proj"/></svg></button><button class="tb"><svg><use href="#wall"/></svg></button><button class="tb"><svg><use href="#starx"/></svg></button><button class="tb"><svg><use href="#extr"/></svg></button><svg class="low"><use href="#caret"/></svg></div>
    <div class="grp"><i class="grip"></i>
      <button class="tb"><svg><use href="#sheetp"/></svg></button><button class="tb"><svg><use href="#cross1"/></svg></button><button class="tb"><svg><use href="#cross2"/></svg></button><button class="tb"><svg><use href="#scurve"/></svg></button><button class="tb"><svg><use href="#fillet"/></svg></button><button class="tb"><svg><use href="#trimc"/></svg></button><button class="tb"><svg><use href="#length"/></svg></button><button class="tb"><svg><use href="#smooth"/></svg></button><svg class="low"><use href="#caret"/></svg></div>
  </div>

  <div class="bar">
    <div class="lead mid2"><i class="grip"></i>
      <button class="tb"><svg><use href="#cys"/></svg></button><button class="tb"><svg><use href="#xdim"/></svg></button><button class="tb"><svg><use href="#back"/></svg></button><button class="tb"><svg><use href="#fwd"/></svg></button><button class="tb"><svg><use href="#flip"/></svg></button><button class="tb"><svg><use href="#pts"/></svg></button><button class="tb"><svg><use href="#probe"/></svg></button></div>
    <div class="grp"><button class="tb"><svg><use href="#ball"/></svg></button><button class="tb"><svg><use href="#split"/></svg></button><button class="tb dd"><svg><use href="#rect2"/></svg><svg class="c"><use href="#caret"/></svg></button><button class="tb dd"><svg><use href="#poly"/></svg><svg class="c"><use href="#caret"/></svg></button><button class="tb"><svg><use href="#axes"/></svg></button><button class="tb"><svg><use href="#mesh"/></svg></button><button class="tb"><svg><use href="#blob"/></svg></button><button class="tb"><svg><use href="#circ"/></svg></button><svg class="low"><use href="#caret"/></svg></div>
    <div class="grp"><i class="grip"></i>
      <button class="tb"><svg><use href="#wrench"/></svg></button><button class="tb"><svg><use href="#ming"/></svg></button><svg class="low"><use href="#caret"/></svg></div>
    <div class="grp"><i class="grip"></i>
      <button class="tb"><svg><use href="#hands"/></svg></button><button class="tb"><svg><use href="#bottle"/></svg></button><button class="tb"><svg><use href="#height"/></svg></button><button class="tb"><svg><use href="#jigsaw"/></svg></button><button class="tb"><svg><use href="#sheet"/></svg></button><button class="tb"><svg><use href="#ball"/></svg></button><button class="tb"><svg><use href="#note"/></svg></button><button class="tb"><svg><use href="#pens"/></svg></button><button class="tb"><svg><use href="#screen"/></svg></button><svg class="low"><use href="#caret"/></svg></div>
    <div class="grp"><i class="grip"></i>
      <button class="tb"><svg><use href="#redbox"/></svg></button><button class="tb"><svg><use href="#press"/></svg></button><button class="tb"><svg><use href="#two"/></svg></button><button class="tb"><svg><use href="#asm"/></svg></button><button class="tb"><svg><use href="#rota"/></svg></button><svg class="low"><use href="#caret"/></svg></div>
    <div class="grp"><i class="grip"></i>
      <button class="tb"><span class="regen">重生视图</span></button><i class="sep"></i><button class="tb"><svg><use href="#rgb"/></svg></button><i class="sep"></i><button class="tb"><svg><use href="#redbox"/></svg></button><svg class="low"><use href="#caret"/></svg></div>
  </div>

  <div class="filterbar">
    <div class="filters">
      <span class="combo f1"><select aria-label="类型过滤器"><option>无选择过滤器</option></select><span class="arr"></span></span>
      <span class="combo f1"><select aria-label="选择范围"><option>整个装配</option></select><span class="arr"></span></span>
    </div>
    <div class="snaps">
      <button class="on"><svg viewBox="0 0 24 24"><path d="M5 19L18 6" stroke="#333" stroke-width="2"/><circle cx="18" cy="6" r="2.500" fill="#b22"/></svg></button><button class="on"><svg viewBox="0 0 24 24"><path d="M5 19L19 5" stroke="#333" stroke-width="2"/><circle cx="12" cy="12" r="2.500" fill="#b22"/></svg></button><button><svg viewBox="0 0 24 24"><path d="M4 3q7-1 8 9t8 9" fill="none" stroke="#333" stroke-width="2"/><circle cx="12" cy="12" r="2.500" fill="#b22"/></svg></button><button><svg viewBox="0 0 24 24"><path d="M12 2v20M2 15q10-8 20 0" fill="none" stroke="#333" stroke-width="2"/><circle cx="12" cy="11" r="2.500" fill="#b22"/></svg></button><button class="on"><svg viewBox="0 0 24 24"><circle cx="12" cy="12" r="10" fill="none" stroke="#333" stroke-width="2"/><circle cx="12" cy="12" r="2.500" fill="#b22"/></svg></button><button><svg viewBox="0 0 24 24"><circle cx="12" cy="12" r="8" fill="none" stroke="#555" stroke-width="2"/><g fill="#b22"><circle cx="12" cy="4" r="3"/><circle cx="12" cy="20" r="3"/><circle cx="4" cy="12" r="3"/><circle cx="20" cy="12" r="3"/></g></svg></button><button class="on"><svg viewBox="0 0 24 24"><path d="M12 3v18M3 12h18" stroke="#333" stroke-width="2"/><circle cx="12" cy="12" r="2" fill="#b22"/></svg></button><button><svg viewBox="0 0 24 24"><path d="M4 21L20 4" stroke="#555" stroke-width="2"/><circle cx="8" cy="16" r="3" fill="#b22"/></svg></button><button><svg viewBox="0 0 24 24"><path d="M2 8q9-7 20-4l-4 12-3 6Q8 18 2 16z" fill="#8ab4ec" stroke="#6a8cc8"/><path d="M4 9q7-5 13-4l-4 10q-5 0-9-1z" fill="#d3e5fb"/><circle cx="12" cy="8" r="2.500" fill="#b22"/></svg></button><i class="sep"></i><button><svg viewBox="0 0 24 24"><path d="M6 3l12 4v16L6 19z" fill="#ddd" stroke="#222" stroke-width="1.500"/><path d="M10 4v16M14 6v16M6 8l12 4M6 13l12 4" stroke="#333" stroke-width="1.500"/><circle cx="12" cy="12" r="2.500" fill="#b22"/></svg></button>
    </div>
    <svg class="low end"><use href="#caret"/></svg>
  </div>

  <main class="work">
    <aside class="strip">
      <button class="cog" aria-label="选项"><svg><use href="#gear"/></svg></button>
      <button class="tab"><svg viewBox="0 0 32 32"><g fill="#f0b81c" stroke="#b8860b"><path d="M3 4l5-3 5 3v6l-5 3-5-3zM9 9l5-3 4 3v6l-4 2-5-2z"/><circle cx="24" cy="24" r="5"/></g><path d="M7 18v13M7 24h8M18 17h12" stroke="#555" stroke-width="2"/></svg></button>
      <button class="tab"><svg viewBox="0 0 32 32"><path d="M4 3l9 6-9 7zM26 3l-9 6 9 7z" fill="#1e2ac8"/><path d="M15 1v30" stroke="#222" stroke-dasharray="4 2"/><path d="M1 20h10v10H1z" fill="#f6e21b" stroke="#111"/><path d="M17 19l12 12H17z" fill="#d81d1d" stroke="#111"/></svg></button>
      <button class="tab"><svg viewBox="0 0 32 32"><path d="M1 4q7-5 13 0v9q-7 4-13 0z" fill="#e094b6" stroke="#8f2d56" stroke-width="1.500"/><path d="M7 18v13M7 23h8M18 12h11" stroke="#46508a" stroke-width="2"/><circle cx="23" cy="24" r="6" fill="none" stroke="#a03260" stroke-width="2"/><circle cx="23" cy="24" r="2" fill="#a03260"/></svg></button>
      <button class="tab active"><svg viewBox="0 0 32 32"><path d="M3 1h6v10h3l-6 6-5-6h2z" fill="#4d86cc"/><path d="M11 3h9M11 7h7M16 13h12" stroke="#4a7fc0" stroke-width="2"/><path d="M7 18v13M7 23h8" stroke="#46508a" stroke-width="2"/><path d="M17 19v9h10l-4-3v-3l-3-3z" fill="#cfe0f5" stroke="#4a6fb0" stroke-width="2"/></svg></button>
      <button class="tab"><svg viewBox="0 0 32 32"><path d="M1 8L20 1v19L1 27z" fill="#fff1d8" stroke="#e09430" stroke-width="1.500"/><path d="M1 14l19-6M1 20l19-6M7 6v19M13 4v18" stroke="#e09430"/><path d="M1 8L20 1" stroke="#6a48b8" stroke-width="2"/><path d="M13 18l9-5 9 5v8l-9 4-9-4z" fill="#f08c28"/><path d="M22 22l9-4v8l-9 5z" fill="#2562cc"/></svg></button>
      <button class="tab"><svg viewBox="0 0 32 32"><path d="M1 12h18v16H1zM19 12l5-3v15l-5 4" fill="#c6c8cc" stroke="#666" stroke-width="1.500"/><path d="M5 16h7v8H5z" fill="#e8f4ff" stroke="#5a7"/><path d="M9 8q5-8 10 0M20 5l5-3 4 3v5l-4 2-5-2z" fill="#f3c8a0" stroke="#dc6820" stroke-width="2"/><path d="M20 22h8l-8 8h9" fill="none" stroke="#555" stroke-width="2"/></svg></button>
      <button class="tab"><svg viewBox="0 0 32 32"><path d="M1 10l8-7h6l-5 7v20H1z" fill="#f3901c"/><path d="M10 10l8-7h4l-3 7v20h-9z" fill="#45b53a"/><path d="M19 10l7-7h5v20l-4 7h-8z" fill="#2f74d8"/><path d="M2 16h7M11 16h7M20 16h7M2 20h7M11 20h7M20 20h7" stroke="#fff" stroke-width="1.500"/></svg></button>
      <button class="tab gap"><svg viewBox="0 0 32 32"><path d="M11 2q18 1 19 20M11 7q12 1 13 14M12 12q7 1 7 9" fill="none" stroke="#4a66b8" stroke-width="3"/><circle cx="11" cy="21" r="10" fill="#1f74d0"/><path d="M11 14v3M9 20h3v6M8 27h7" stroke="#fff" stroke-width="3" fill="none"/></svg></button>
      <button class="tab gap"><svg viewBox="0 0 32 32"><path d="M4 2h16l8 8v20H4z" fill="#f3f8ff" stroke="#5a78b8" stroke-width="2"/><path d="M20 2v8h8" fill="none" stroke="#5a78b8" stroke-width="2"/><circle cx="16" cy="19" r="7" fill="#3b8f52"/><path d="M13 21q0-6 3-8 4 4 3 8z" fill="#b5ddf3"/></svg></button>
      <button class="tab gap"><svg viewBox="0 0 32 32"><circle cx="16" cy="16" r="14" fill="#dbe5f3" stroke="#71798a" stroke-width="2"/><circle cx="16" cy="16" r="11" fill="none" stroke="#345" stroke-dasharray="1 5"/><path d="M16 6v10h9" fill="none" stroke="#123" stroke-width="2"/></svg></button>
      <button class="tab"><svg viewBox="0 0 32 32"><path d="M3 1h11v30H3z" fill="url(#gRain)"/><circle cx="15" cy="9" r="5" fill="#fff" opacity=".8"/><path d="M15 12l10 16" stroke="#111" stroke-width="4"/></svg></button>
      <button class="tab cutoff"><svg viewBox="0 0 32 32"><path d="M2 14h9v8H2z" fill="#3f78cc"/><path d="M4 17h5v3H4z" fill="#c7dcf6"/></svg></button>
      <div class="pagers">
        <button disabled aria-label="首页"><svg viewBox="0 0 18 18"><path d="M4 4h10M9 6l5 6H4z" fill="#bbb" stroke="#bbb"/></svg></button>
        <button disabled aria-label="上移"><svg viewBox="0 0 18 18"><path d="M9 6l5 5H4z" fill="#bbb"/></svg></button>
        <button aria-label="下移"><svg viewBox="0 0 18 18"><path d="M9 12l5-5H4z" fill="#555"/></svg></button>
        <button aria-label="末页"><svg viewBox="0 0 18 18"><path d="M9 11l5-5H4zM4 13h10" fill="#555" stroke="#555"/></svg></button>
      </div>
    </aside>

    <section class="panel">
      <h2>工序导航器<kbd> - </kbd>程序顺序</h2>
      <div class="treebox">
        <table class="tree">
          <colgroup><col class="c1"><col class="c2"><col class="c3"><col class="c4"><col class="c5"><col></colgroup>
          <thead><tr><th>名称</th><th>换刀</th><th></th><th></th><th></th><th></th></tr></thead>
          <tbody>
            <tr><td><div class="n l0">NC_PROGRAM</div></td><td></td><td></td><td></td><td></td><td></td></tr>
            <tr><td><div class="n l1 han"><svg><use href="#fold"/></svg>未用项</div></td><td></td><td></td><td></td><td></td><td></td></tr>
            <tr><td><div class="n l1"><svg><use href="#no"/></svg><svg><use href="#fold"/></svg>PROGRAM</div></td><td></td><td></td><td></td><td></td><td></td></tr>
            <tr class="bad"><td><div class="n l2"><svg><use href="#no"/></svg><svg><use href="#mill"/></svg>CAVITY_MILL</div></td><td><svg class="bit"><use href="#bit"/></svg></td><td></td><td></td><td></td><td></td></tr>
            <tr class="bad"><td><div class="n l2"><svg><use href="#no"/></svg><svg><use href="#mill"/></svg>CAVITY_MILL...</div></td><td><svg class="bit"><use href="#bit"/></svg></td><td></td><td></td><td></td><td></td></tr>
            <tr><td><div class="n l1"><svg><use href="#bang"/></svg><svg><use href="#fold"/></svg>PROGRAM_1</div></td><td></td><td></td><td></td><td></td><td></td></tr>
            <tr class="sel"><td><div class="n l2"><svg><use href="#bang"/></svg><svg><use href="#mill"/></svg>CAVITY_MILL...</div></td><td><svg class="bit"><use href="#bit"/></svg></td><td></td><td></td><td></td><td></td></tr>
            <tr><td><div class="n l2"><svg><use href="#bang"/></svg><svg><use href="#mill"/></svg>CAVITY_MILL...</div></td><td></td><td></td><td></td><td></td><td></td></tr>
            <tr><td></td><td></td><td></td><td></td><td></td><td></td></tr><tr><td></td><td></td><td></td><td></td><td></td><td></td></tr>
            <tr><td></td><td></td><td></td><td></td><td></td><td></td></tr><tr><td></td><td></td><td></td><td></td><td></td><td></td></tr>
            <tr><td></td><td></td><td></td><td></td><td></td><td></td></tr><tr><td></td><td></td><td></td><td></td><td></td><td></td></tr>
            <tr><td></td><td></td><td></td><td></td><td></td><td></td></tr><tr><td></td><td></td><td></td><td></td><td></td><td></td></tr>
            <tr><td></td><td></td><td></td><td></td><td></td><td></td></tr><tr><td></td><td></td><td></td><td></td><td></td><td></td></tr>
            <tr><td></td><td></td><td></td><td></td><td></td><td></td></tr><tr><td></td><td></td><td></td><td></td><td></td><td></td></tr>
            <tr><td></td><td></td><td></td><td></td><td></td><td></td></tr><tr><td></td><td></td><td></td><td></td><td></td><td></td></tr>
            <tr><td></td><td></td><td></td><td></td><td></td><td></td></tr><tr><td></td><td></td><td></td><td></td><td></td><td></td></tr>
            <tr><td></td><td></td><td></td><td></td><td></td><td></td></tr><tr><td></td><td></td><td></td><td></td><td></td><td></td></tr>
            <tr><td></td><td></td><td></td><td></td><td></td><td></td></tr>
          </tbody>
        </table>
        <svg class="wires"><path d="M13 39v93M13 38h12M18 64h7M18 141h7M38 76v39M38 90h10M38 115h10M38 153v39M38 167h10M38 192h10" fill="none" stroke="#999" stroke-dasharray="1 2"/><g fill="#fff" stroke="#777"><path d="M7 58h10v10H7zM7 135h10v10H7z"/></g><path d="M9 63h6M9 140h6" stroke="#222"/></svg>
        <div class="hscroll"><svg viewBox="0 0 10 10"><path d="M7 1v8L3 5z" fill="#333"/></svg><div class="track"><span class="thumb"><svg viewBox="0 0 10 10"><path d="M1 1v8M5 1v8M9 1v8" stroke="#666" stroke-width="2"/></svg></span></div><svg viewBox="0 0 10 10"><path d="M3 1v8l4-4z" fill="#333"/></svg></div>
      </div>
      <div class="splitter"><i></i></div>
    </section>

    <aside class="vtool">
      <div class="vlist">
        <button class="tb"><svg><use href="#und"/></svg></button><button class="tb"><svg><use href="#redo"/></svg></button><button class="tb"><svg><use href="#chkbox"/></svg></button><button class="tb"><svg><use href="#chkpl"/></svg></button><button class="tb"><svg><use href="#pl"/></svg></button><button class="tb"><svg><use href="#chkm"/></svg></button>
        <i class="hsep"></i>
        <button class="tb"><svg><use href="#toolarr"/></svg></button><button class="tb"><svg><use href="#toolblk"/></svg></button>
        <div class="more"><svg viewBox="0 0 10 10"><path d="M6 1v8L2 5z" fill="#111"/></svg><svg viewBox="0 0 10 10"><path d="M2 0l3 3 3-3M2 5l3 3 3-3" fill="none" stroke="#111" stroke-width="2"/></svg></div>
        <i class="hgrip"></i>
        <button class="spin"><svg><use href="#spindle"/></svg><svg class="c"><use href="#caret"/></svg></button>
        <div class="more"><svg viewBox="0 0 10 10"><path d="M6 1v8L2 5z" fill="#111"/></svg></div>
      </div>
    </aside>

    <section class="view" aria-label="图形窗口">
      <svg class="scene">
        <rect x="190" y="0" width="625" height="327" fill="url(#gFace)"/>
        <rect x="190" y="327" width="625" height="18" fill="url(#gBand)"/>
        <path d="M503 0v344" stroke="#8f6c05"/><path d="M503 327v17" stroke="#5a3606"/>
        <path d="M560 327h255" stroke="#4c3a06" stroke-width="2"/><path d="M815 0v350" stroke="#6b4506" stroke-width="2"/>
        <path d="M0 11h563M0 62h563M0 116h563M0 168h563M0 222h563M0 284h563M190 327h373" fill="none" stroke="#7ddb6c" stroke-width="2"/>
        <path d="M0 11h190M0 62h190M0 116h190M0 168h190M0 222h190M0 284h190" fill="none" stroke="#6fd092" stroke-width="2"/>
        <path d="M60 328h33v17H60z" fill="#a8672f"/><path d="M60 329h33M60 335h33M60 341h33" stroke="#9b1d0c"/>
        <path d="M93 327h57v18H93z" fill="#990000"/><path d="M150 327h40v18h-40z" fill="#9c6a33"/><path d="M150 327h40M187 328v17" stroke="#c9b27a"/>
        <path d="M0 347h815" stroke="#f2a14e" stroke-width="4"/>
        <path d="M660 6v330" stroke="#554326" stroke-width="2" stroke-dasharray="31 5 5 4"/><path d="M660 326v60" stroke="#49206b" stroke-width="2" stroke-dasharray="17 3 5 3"/>
        <g fill="none" stroke="#111" stroke-width="4"><path d="M785 319v38M766 338h38"/></g>
        <circle cx="785" cy="338" r="14" fill="none" stroke="#2a1c05" stroke-width="3" stroke-dasharray="16 6" stroke-dashoffset="-3"/>
        <circle cx="785" cy="338" r="14" fill="none" stroke="#e8dcb8" stroke-dasharray="16 6" stroke-dashoffset="-3"/>
        <path d="M785 320v36M767 338h36" stroke="#fff" stroke-width="2"/>
      </svg>
      <output class="measure"><i></i><span>=0.300000 mm</span></output>
      <div class="corner">
        <svg class="triad" viewBox="0 0 60 70"><path d="M2 4h6L2 15h7" fill="none" stroke="#5a4480" stroke-width="2"/><path d="M9 34h26v27H9z" fill="#bba98c"/><path d="M6 61V22" stroke="#1b33c8" stroke-width="4"/><path d="M2 26l4-9 4 9z" fill="#1b33c8"/><path d="M8 62h30" stroke="#b51f1f" stroke-width="4"/><path d="M36 59l12 3-12 3z" fill="#b51f1f"/><circle cx="6" cy="61" r="5" fill="#a8e0c0"/><path d="M3 58l6 6M9 58l-6 6" stroke="#4a9a6a"/></svg>
        <p class="viewname"><span>正三轴测图</span><span>工作</span><span>摄像机</span><span>正三轴测图</span></p>
      </div>
    </section>
  </main>

  <footer class="status">
    <p class="cue">选择第二点或对象来测量距离</p>
    <p class="picked">面<kbd> / </kbd>体<kbd>(1)</kbd></p>
    <button class="full" aria-label="全屏"><svg viewBox="0 0 20 20"><path d="M1 5V1h4M15 1h4v4M19 15v4h-4M5 19H1v-4" fill="none" stroke="#999"/><path d="M4 4h12v13H4z" fill="#fff" stroke="#555" stroke-width="2"/><path d="M7 8h6v6H7z" fill="#2e6fd0"/></svg></button>
  </footer>
</div>

<form class="dialog" role="dialog" aria-label="测量距离">
  <header><svg class="dg"><use href="#gear"/></svg><h2>测量距离</h2>
    <button type="button" aria-label="重置"><svg viewBox="0 0 20 20"><path d="M11 5q5 2 3 7-3 4-9 2" fill="none" stroke="#fff" stroke-width="3"/><path d="M13 3H7v5z" fill="#fff"/></svg></button>
    <button type="button" aria-label="关闭"><svg viewBox="0 0 20 20"><path d="M4 4l12 12M16 4L4 16" stroke="#fff" stroke-width="3"/></svg></button></header>
  <div class="sections">
    <h3>类型<b></b></h3>
    <div class="body b1"><span class="combo type"><svg viewBox="0 0 20 20"><path d="M2 14l5 5M12 2l6 5" stroke="#28349c" stroke-width="3"/><path d="M6 15l9-9" stroke="#b02a5c" stroke-width="3" stroke-dasharray="4 1"/></svg><select aria-label="类型"><option>距离</option></select><span class="arr"></span></span></div>
    <h3>起点<b></b></h3>
    <div class="body b2"><div class="pick"><svg class="tk"><use href="#tick"/></svg>选择点或对象<kbd> (1)</kbd></div><button type="button" class="pt" aria-label="点对话框"><svg><use href="#ptdlg"/></svg></button><button type="button" class="pp" aria-label="点"><svg viewBox="0 0 32 32"><path d="M3 7v17M29 7v15M4 14h24" stroke="#d22a2a" stroke-width="2"/><path d="M4 14l6-3v6zM28 14l-6-3v6zM14 5l4 5M18 5l-4 5" fill="#d22a2a" stroke="#d22a2a"/><path d="M8 26h22" stroke="#111" stroke-width="2"/><circle cx="4" cy="26" r="3" fill="#d22a2a"/></svg></button></div>
    <h3>终点<b></b></h3>
    <div class="body b2"><div class="pick hot"><svg class="tk"><use href="#tick"/></svg>选择点或对象<kbd> (1)</kbd></div><button type="button" class="pt" aria-label="点对话框"><svg><use href="#ptdlg"/></svg></button><button type="button" class="pp hot" aria-label="点"><svg viewBox="0 0 32 32"><path d="M3 7v17M29 7v15M4 14h24" stroke="#c21f14" stroke-width="2"/><path d="M4 14l6-3v6zM28 14l-6-3v6zM14 5l4 5M18 5l-4 5" fill="#c21f14" stroke="#c21f14"/><path d="M3 26h20" stroke="#311" stroke-width="2"/><circle cx="27" cy="26" r="3" fill="#c21f14"/></svg></button></div>
    <h3>测量<b></b></h3>
    <div class="body b3"><label for="dist">距离</label><span class="combo dist"><select id="dist"><option>最小值</option></select><span class="arr"></span></span></div>
    <h3>结果显示<b></b></h3>
    <div class="body b4">
      <label><input type="checkbox">显示信息窗口</label>
      <label><input type="checkbox">显示尺寸</label>
      <label class="off"><input type="checkbox" disabled>创建输出几何体</label>
    </div>
    <h3>设置<b class="down"></b></h3>
    <div class="fold"><svg viewBox="0 0 54 10"><path d="M3 8l4-5 4 5M23 8l4-5 4 5M43 8l4-5 4 5" fill="none" stroke="#111" stroke-width="3"/></svg></div>
  </div>
  <div class="actions"><button type="button" class="ok"><svg viewBox="0 0 6 14"><path d="M5 2L1 7l4 5" fill="none" stroke="#2b5a26"/></svg>确定<svg viewBox="0 0 6 14"><path d="M1 2l4 5-4 5" fill="none" stroke="#2b5a26"/></svg></button><button type="button">应用</button><button type="button">取消</button></div>
</form>
</body>
</html>
```
FILE: styles.css
```css
* { box-sizing: border-box; }
body { margin: 0; background: #161616; color: #111; font: 15px/20px "Noto Sans CJK SC", sans-serif; overflow: hidden; }
h1, h2, h3, p { margin: 0; font: inherit; }
button, select, input { font: inherit; color: inherit; margin: 0; padding: 0; border: 0; background: none; }
button svg { display: block; }
kbd { font-family: "Liberation Mono", monospace; font-size: 13px; white-space: pre; }
.sprite { position: absolute; width: 0; height: 0; }
.app { height: 100vh; display: flex; flex-direction: column; padding: 0 5px 8px; }

.titlebar { height: 36px; flex: none; display: flex; align-items: center; margin: 0 -5px; padding: 0 8px; gap: 7px; background: linear-gradient(#6d6e70, #4b4c4e 10px, #1c1c1c 11px); }
.titlebar h1 { flex: 1; color: #eee; font: 16px/20px "Noto Sans", "Noto Sans CJK SC", sans-serif; white-space: nowrap; }
.logo { width: 20px; height: 26px; }
.brand { color: #fff; font: 800 17px/20px "Noto Sans", sans-serif; }
.winbtns { display: flex; gap: 4px; margin-left: 26px; }
.winbtns button { width: 24px; height: 24px; border-radius: 3px; border: 1px solid #555; background: linear-gradient(#5d5e60, #2b2b2b); }
.winbtns .close { background: linear-gradient(#f0937c, #d8432a); border-color: #e8a090; }

.menubar { height: 28px; flex: none; display: flex; align-items: center; background: #e4e4e4; border-bottom: 1px solid #c9c9c9; }
.menus { display: flex; }
.menus.first { width: 688px; padding-left: 1px; }
.menus.first .grip { height: 20px; }
.mi { width: 20px; height: 20px; margin: 0 7px 0 0; }
.menus button { margin-right: 17px; white-space: nowrap; }
.menus.rest { flex: 1; }
.docbtns { display: flex; gap: 4px; margin-right: 6px; }
.docbtns button { width: 21px; height: 21px; border: 1px solid #888; border-radius: 4px; background: #f4f4f4; }
.docbtns .dim { border-color: #ccc; }

.bar { height: 44px; flex: none; display: flex; background: linear-gradient(#e6e6e6, #cfcfcf); border-bottom: 1px solid #b9b9b9; }
.bar + .bar { background: linear-gradient(#e2e2e2, #cbcbcb); }
.lead, .grp { display: flex; align-items: center; flex: none; }
.grp { border-right: 1px solid #bbb; box-shadow: 1px 0 #f2f2f2; }
.lead.wide { width: 668px; padding-left: 1px; }
.lead.mid { width: 639px; }
.lead.mid2 { width: 646px; }
.grip { flex: none; width: 4px; height: 30px; margin: 0 1px 0 5px; background: radial-gradient(circle at 2px 2px, #fff 1px, #aaa 2px, transparent 2px) 0 0 / 4px 5px; }
.tb { width: 40px; height: 40px; flex: none; display: flex; align-items: center; justify-content: center; }
.tb svg { width: 32px; height: 32px; flex: none; opacity: .92; }
.tb.dd { width: 55px; justify-content: flex-start; padding-left: 4px; gap: 6px; }
.tb svg.c, .start svg.c, .spin svg.c { width: 10px; height: 6px; }
.low { width: 10px; height: 6px; margin: 18px 3px 0; flex: none; }
.sep { flex: none; width: 2px; height: 38px; margin: 0 3px; background: linear-gradient(90deg, #b5b5b5 1px, #f2f2f2 1px); }
.start { display: flex; align-items: center; gap: 5px; margin: 0 3px 0 0; width: 82px; }
.start svg:first-child { width: 30px; height: 32px; }
.regen { width: 32px; height: 32px; background: #fff; color: #7d9a1c; font-size: 15px; line-height: 16px; }

.combo { display: flex; height: 20px; background: #fff; border: 1px solid #777; border-radius: 3px; overflow: hidden; }
.combo select { appearance: none; flex: 1; min-width: 0; outline: 0; line-height: 18px; }
.arr { width: 20px; flex: none; background: linear-gradient(#a9c9ee, #7ab0e8 50%, #a9dcfa); display: flex; align-items: center; justify-content: center; }
.arr::before { content: ""; border: 6px solid transparent; border-top: 8px solid #111; border-bottom: 0; }
.layer { width: 53px; margin: 0 7px 0 5px; height: 21px; }
.layer select { font: 13px/18px "Liberation Mono", monospace; }

.filterbar { height: 36px; flex: none; display: flex; align-items: center; background: linear-gradient(#cdcdcd, #dcdcdc); border-top: 2px solid #aaa; }
.filters { width: 677px; display: flex; gap: 10px; padding-left: 7px; }
.f1 { width: 146px; }
.snaps { display: flex; flex: 1; align-items: center; }
.snaps button { width: 29px; height: 28px; display: flex; align-items: center; justify-content: center; border: 1px solid transparent; border-radius: 4px; }
.snaps button.on { background: #fff; border-color: #777; }
.snaps svg { width: 22px; height: 22px; }
.snaps .sep { height: 28px; }
.low.end { margin: 8px 5px 0; }

.work { flex: 1; min-height: 0; display: flex; }
.strip { width: 40px; flex: none; background: #a7a7a7; display: flex; flex-direction: column; align-items: flex-end; border-right: 1px solid #888; }
.cog { height: 55px; width: 34px; padding: 10px 0 25px 4px; flex: none; color: #222; }
.cog svg { width: 18px; height: 18px; }
.tab { width: 34px; height: 50px; flex: none; margin-top: 4px; padding-left: 2px; display: flex; align-items: center; border: 1px solid #777; border-right: 0; border-radius: 5px 0 0 5px; background: linear-gradient(90deg, #e0e0e0, #cfcfcf); }
.tab svg { width: 30px; height: 30px; }
.tab.active { width: 36px; background: #ececec; }
.tab.gap { margin-top: 19px; }
.tab.cutoff { height: 20px; overflow: hidden; align-items: flex-start; }
.pagers { display: flex; flex-direction: column; gap: 2px; margin: 9px 10px 0 0; }
.pagers button { width: 18px; height: 19px; background: #ececec; }
.pagers svg { width: 18px; height: 18px; }

.panel { width: 506px; flex: none; display: flex; flex-direction: column; background: #ebebeb; border-right: 2px solid #aaa; border-bottom: 2px solid #aaa; padding-left: 9px; }
.panel h2 { font-weight: 700; font-size: 17px; line-height: 20px; padding: 11px 6px 9px; }
.treebox { position: relative; flex: 1; min-height: 0; margin-right: 12px; border: 1px solid #888; background: #f6f6f6; display: flex; flex-direction: column; }
.tree { flex: 1; width: 100%; border-collapse: collapse; table-layout: fixed; margin-bottom: 9px; font: 13px/18px "Liberation Mono", monospace; }
.c1 { width: 210px; } .c2 { width: 49px; } .c3 { width: 55px; } .c4 { width: 99px; } .c5 { width: 62px; }
.tree th { height: 23px; padding: 0 8px; text-align: left; font: 15px/20px "Noto Sans CJK SC", sans-serif; background: linear-gradient(#f4f4f4, #d9d9d9); border-bottom: 1px solid #888; border-right: 1px solid #aaa; white-space: nowrap; }
.tree td { height: 25px; padding: 0; background: #fff; border-right: 1px solid #e4e4e4; border-bottom: 1px solid #e4e4e4; }
.tree tr:nth-child(even) td { background: #f6f6f6; }
.tree td:first-child { border-right: 2px solid #555; }
.n { display: flex; align-items: center; gap: 3px; white-space: nowrap; }
.n svg { width: 18px; height: 18px; flex: none; }
.n.han { font: 15px/18px "Noto Sans CJK SC", sans-serif; gap: 5px; }
.l0 { padding-left: 5px; } .l1 { padding-left: 27px; } .l2 { padding-left: 52px; gap: 3px; }
.bad { color: #6a3fa8; }
.bit { display: block; width: 12px; height: 18px; margin-left: 10px; }
.tree tbody tr.sel td { background: #3399f3; color: #e8f4ff; border-color: #3399f3; }
.tree tbody tr.sel td:first-child { background: linear-gradient(90deg, #fff 92px, #3399f3 92px); border-right-color: #27507c; }
.wires { position: absolute; left: 0; top: 24px; width: 60px; height: 220px; }
.hscroll { flex: none; height: 20px; display: flex; align-items: center; background: #ececec; padding: 0 8px; gap: 7px; }
.hscroll svg { width: 10px; height: 10px; }
.track { flex: 1; }
.thumb { display: flex; align-items: center; justify-content: center; width: 201px; height: 18px; border: 1px solid #999; background: linear-gradient(#eee, #c4c4c4); }
.splitter { height: 23px; flex: none; display: flex; align-items: center; justify-content: center; margin-right: 12px; background: linear-gradient(transparent 9px, #bbb 9px, #bbb 10px, transparent 10px); }
.splitter i { width: 88px; height: 8px; margin-bottom: 4px; background: #d8d8d8; border: 1px solid #bbb; border-top-color: #fff; }

.vtool { width: 59px; flex: none; display: flex; flex-direction: column; justify-content: flex-end; background: linear-gradient(90deg, #dcdcdc, #cbcbcb); }
.vlist { display: flex; flex-direction: column; align-items: center; }
.vlist > .tb svg { width: 30px; height: 30px; }
.hsep { width: 56px; height: 2px; margin: 2px 0; background: linear-gradient(#aaa 1px, #f2f2f2 1px); }
.more { width: 56px; height: 20px; display: flex; justify-content: space-between; align-items: center; padding: 0 4px 0 6px; }
.more svg { width: 10px; height: 10px; }
.hgrip { width: 48px; height: 10px; border-top: 1px solid #f2f2f2; background: radial-gradient(circle at 2px 2px, #fff 1px, #aaa 2px, transparent 2px) 0 3px / 5px 5px repeat-x; }
.spin { width: 56px; height: 38px; display: flex; align-items: center; gap: 8px; padding-left: 6px; }
.spin svg:first-child { width: 28px; height: 24px; }

.view { position: relative; flex: 1; min-width: 0; overflow: hidden; background: #98550a; border: 2px solid #e3a25c; border-right: 0; display: flex; align-items: flex-end; }
.scene { position: absolute; left: -2px; top: -2px; width: 100%; height: 100%; }
.measure { position: absolute; left: 191px; top: 319px; display: flex; height: 30px; border: 1px solid #999; background: linear-gradient(#e8e8e8, #bbb); font: 13px/28px "Liberation Mono", monospace; }
.measure i { width: 15px; background: radial-gradient(circle at 3px 3px, #111 2px, transparent 2px) 2px 4px / 5px 8px, linear-gradient(90deg, #888, #222); }
.measure span { padding: 0 4px; }
.corner { position: relative; padding: 0 0 3px 6px; }
.triad { display: block; width: 60px; height: 70px; margin: 0 0 39px 54px; }
.viewname { display: flex; gap: 8px; color: #dc9748; font-size: 16px; line-height: 20px; }

.status { height: 28px; flex: none; display: flex; align-items: center; padding-bottom: 3px; background: #d9d9d9; border-top: 2px solid #f0dfc8; font-weight: 700; font-size: 17px; }
.cue { width: 895px; padding-left: 3px; }
.picked { flex: 1; border-left: 1px solid #f2f2f2; padding-left: 4px; }
.full { margin-right: 68px; width: 20px; height: 20px; }

.dialog { position: absolute; left: 305px; top: 34px; width: 371px; background: #e9e9e9; border-bottom: 11px solid #1c1c1c; border-radius: 6px; font-size: 15px; }
.dialog > header { height: 28px; display: flex; align-items: center; color: #fff; background: linear-gradient(#777, #444 10px, #1c1c1c 11px); border-radius: 6px 6px 0 0; }
.dialog > header h2 { flex: 1; height: 28px; border-left: 1px solid #999; padding-left: 12px; font-weight: 700; font-size: 17px; line-height: 26px; }
.dialog > header button { height: 28px; width: 28px; border-left: 1px solid #777; padding: 4px; }
.dg { width: 18px; height: 18px; margin: 0 4px; }
.sections { margin: 4px 8px 0; border-right: 1px solid #999; }
.sections h3 { height: 30px; display: flex; align-items: center; justify-content: space-between; padding-left: 7px; font-weight: 700; font-size: 16px; background: linear-gradient(#fafafa, #f0f0f0 45%, #dfe0e0); border-bottom: 2px solid #a5a5a5; }
.sections h3 b { width: 29px; height: 28px; border-left: 1px solid #aaa; display: flex; align-items: center; justify-content: center; }
.sections h3 b::before { content: ""; width: 9px; height: 9px; margin-top: 6px; border: solid #555; border-width: 3px 0 0 3px; transform: rotate(45deg); }
.sections h3 b.down::before { margin: -6px 0 0; transform: rotate(225deg); }
.body { background: #d2d2d2; border-left: 1px solid #aaa; padding: 0 11px 3px 9px; display: flex; align-items: center; justify-content: space-between; }
.b1 { height: 53px; padding-bottom: 5px; } .b2 { height: 60px; } .b3 { height: 45px; padding-bottom: 4px; }
.b4 { height: 101px; flex-direction: column; align-items: flex-start; justify-content: flex-start; gap: 8px; padding-top: 10px; }
.type { flex: 1; height: 31px; border-width: 2px; background: #3399f8; color: #fff; align-items: center; }
.type svg { width: 20px; height: 20px; margin: 0 6px 0 4px; }
.type .arr { height: 100%; width: 21px; border-left: 1px solid #fff; }
.pick { flex: 1; height: 39px; display: flex; align-items: center; border-radius: 6px; }
.pick kbd { padding-left: 4px; }
.pick.hot { background: linear-gradient(90deg, #e3a767, #ddb286 40%, #d2d2d2 88%); }
.tk { width: 18px; height: 18px; margin: 0 6px 0 2px; }
.pt { width: 28px; height: 28px; border: 2px solid #888; border-radius: 5px; background: #f3f3f3; margin-right: 6px; }
.pt svg { width: 24px; height: 24px; }
.pp { width: 38px; height: 38px; border: 2px solid #888; border-radius: 5px; background: linear-gradient(#fafafa, #e4e4e4); padding: 1px; }
.pp.hot { background: linear-gradient(#ffd8be, #fb7a3a); border-color: #a8705a; }
.dist { width: 137px; height: 24px; border-width: 2px; }
.dist select { padding-left: 4px; }
.b4 label { display: flex; align-items: center; gap: 3px; height: 20px; }
.b4 input { appearance: none; width: 20px; height: 20px; border: 2px solid #888; border-radius: 4px; background: linear-gradient(#ececec, #d2d2d2, #f2f2f2); }
.off { color: #a4a4a4; }
.b4 .off input { border-color: #bbb; background: #e4e4e4; }
.fold { height: 18px; display: flex; align-items: center; justify-content: center; background: linear-gradient(#fafafa, #e4e4e4); border-bottom: 1px solid #aaa; }
.fold svg { width: 54px; height: 10px; }
.actions { display: flex; justify-content: flex-end; gap: 9px; padding: 11px 21px 15px 0; }
.actions button { width: 67px; height: 23px; border: 2px solid #888; border-radius: 5px; line-height: 18px; background: linear-gradient(#f2f2f2, #d5d5d5 50%, #f4f4f4); }
.actions .ok { display: flex; align-items: center; justify-content: space-between; padding: 0 2px; border-color: #4a7a44; background: linear-gradient(#c5ecb8, #86d673 50%, #b8f59a); }
.ok svg { width: 6px; height: 14px; }
```
